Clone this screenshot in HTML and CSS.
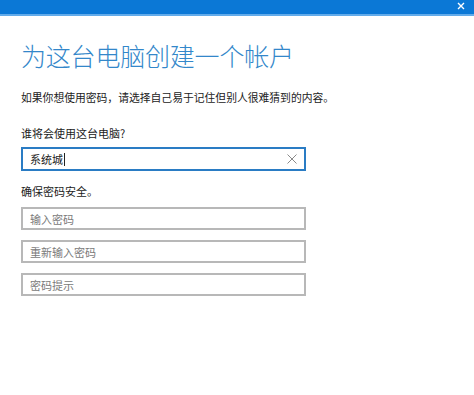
FILE: index.html
```html
<!DOCTYPE html>
<html lang="zh-CN">
<head>
  <meta charset="UTF-8">
  <meta content="width=device-width, initial-scale=1.0" name="viewport">
  <title>为这台电脑创建一个帐户</title>
  <link rel="stylesheet" href="styles.css">
</head>
<body>
  <div class="top-bar">
    <svg class="close-icon" width="8" height="8" viewBox="0 0 8 8">
      <path d="M1 1 L7 7 M7 1 L1 7" stroke="#ffffff" stroke-width="1.4" fill="none"/>
    </svg>
  </div>
  <div class="content">
    <h1 class="title">为这台电脑创建一个帐户</h1>
    <p class="intro">如果你想使用密码，请选择自己易于记住但别人很难猜到的内容。</p>
    <p class="label">谁将会使用这台电脑?</p>
    <div class="field field-active">
      <span class="value">系统城</span><span class="caret"></span>
      <svg class="clear-icon" width="10" height="10" viewBox="0 0 10 10">
        <path d="M0.5 0.5 L9.5 9.5 M9.5 0.5 L0.5 9.5" stroke="#8a8a8a" stroke-width="1" fill="none"/>
      </svg>
    </div>
    <p class="label label-pw">确保密码安全。</p>
    <div class="field-list">
      <div class="field"><span class="hint">输入密码</span></div>
      <div class="field"><span class="hint">重新输入密码</span></div>
      <div class="field"><span class="hint">密码提示</span></div>
    </div>
  </div>
</body>
</html>
```

FILE: styles.css
```css
body {
    margin: 0;
    background: #ffffff;
    font-family: "Noto Sans CJK SC", "Noto Sans", sans-serif;
    color: #222222;
}
.top-bar {
    height: 14px;
    background: #0b78d6;
    border-bottom: 2px solid #62abea;
    display: flex;
    align-items: center;
    justify-content: flex-end;
    padding-right: 9px;
}
.close-icon {
    display: block;
    margin-top: -2px;
}
.content {
    padding: 0 21px;
    width: 285px;
}
.title {
    margin: 24px 0 0 0;
    font-size: 25px;
    line-height: 30px;
    font-weight: 300;
    color: #3387ca;
    letter-spacing: -0.2px;
}
.intro {
    margin: 19px 0 0 0;
    font-size: 10.8px;
    line-height: 16px;
    white-space: nowrap;
}
.label {
    margin: 20px 0 0 0;
    font-size: 11px;
    line-height: 16px;
}
.label-pw {
    margin-top: 12px;
}
.field {
    box-sizing: border-box;
    height: 23px;
    border: 2px solid #b8b8b8;
    display: flex;
    align-items: center;
    padding: 0 7px;
    font-size: 11px;
}
.field-active {
    margin-top: 6px;
    height: 24px;
    border-color: #2a7cc4;
}
.value {
    color: #222222;
}
.caret {
    width: 1px;
    height: 13px;
    background: #222222;
    margin-left: 1px;
}
.clear-icon {
    margin-left: auto;
    margin-right: 0;
}
.field-list {
    margin-top: 8px;
    display: flex;
    flex-direction: column;
    gap: 10px;
}
.hint {
    color: #7a7a7a;
}
```
